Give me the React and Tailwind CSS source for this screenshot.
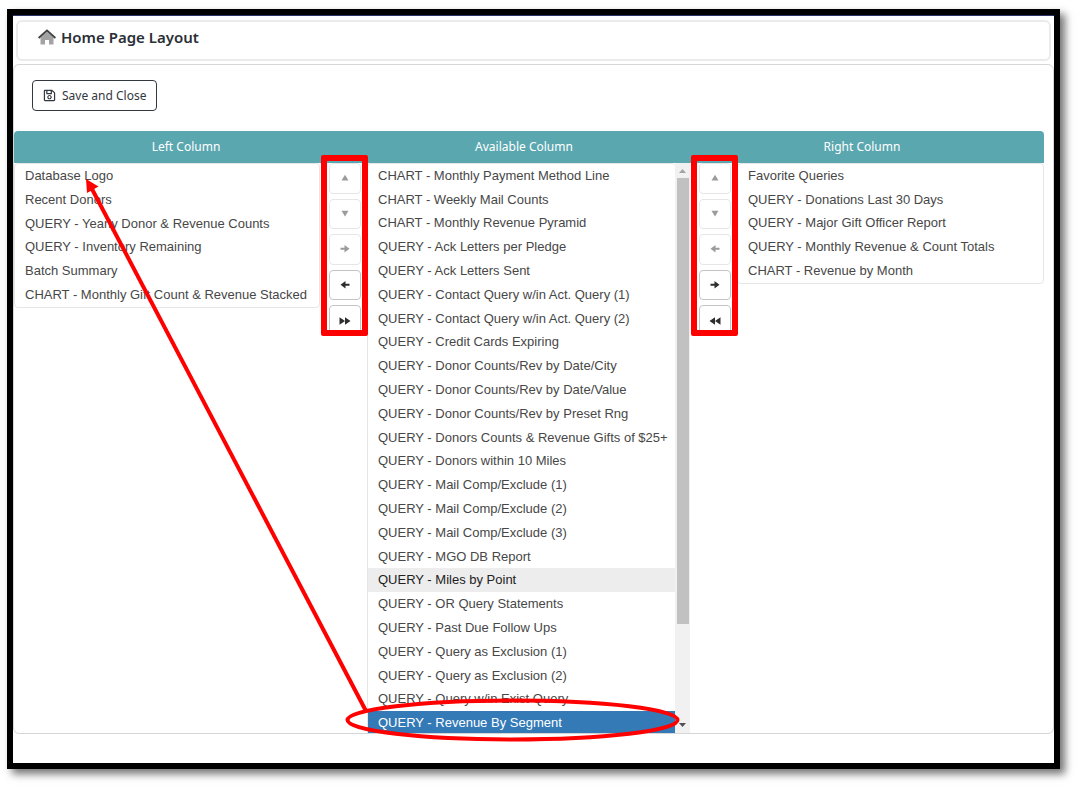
import React, { useState } from 'react';
import { FaRegSave } from 'react-icons/fa';

const leftItems = [
  'Database Logo',
  'Recent Donors',
  'QUERY - Yearly Donor & Revenue Counts',
  'QUERY - Inventory Remaining',
  'Batch Summary',
  'CHART - Monthly Gift Count & Revenue Stacked',
];

const availableItems = [
  'CHART - Monthly Payment Method Line',
  'CHART - Weekly Mail Counts',
  'CHART - Monthly Revenue Pyramid',
  'QUERY - Ack Letters per Pledge',
  'QUERY - Ack Letters Sent',
  'QUERY - Contact Query w/in Act. Query (1)',
  'QUERY - Contact Query w/in Act. Query (2)',
  'QUERY - Credit Cards Expiring',
  'QUERY - Donor Counts/Rev by Date/City',
  'QUERY - Donor Counts/Rev by Date/Value',
  'QUERY - Donor Counts/Rev by Preset Rng',
  'QUERY - Donors Counts & Revenue Gifts of $25+',
  'QUERY - Donors within 10 Miles',
  'QUERY - Mail Comp/Exclude (1)',
  'QUERY - Mail Comp/Exclude (2)',
  'QUERY - Mail Comp/Exclude (3)',
  'QUERY - MGO DB Report',
  'QUERY - Miles by Point',
  'QUERY - OR Query Statements',
  'QUERY - Past Due Follow Ups',
  'QUERY - Query as Exclusion (1)',
  'QUERY - Query as Exclusion (2)',
  'QUERY - Query w/in Exist Query',
  'QUERY - Revenue By Segment',
];

const rightItems = [
  'Favorite Queries',
  'QUERY - Donations Last 30 Days',
  'QUERY - Major Gift Officer Report',
  'QUERY - Monthly Revenue & Count Totals',
  'CHART - Revenue by Month',
];

const iconPaths = {
  up: 'M8 4.8 L11.5 10.5 H4.5 Z',
  down: 'M8 10.5 L11.5 4.8 H4.5 Z',
  right: 'M3.5 6.8 H7.5 V4 L12.5 7.8 L7.5 11.6 V8.8 H3.5 Z',
  left: 'M12.5 6.8 H8.5 V4 L3.5 7.8 L8.5 11.6 V8.8 H12.5 Z',
  allRight: 'M2.5 4.3 L8 8 L2.5 11.7 Z M8 4.3 L13.5 8 L8 11.7 Z',
  allLeft: 'M13.5 4.3 L8 8 L13.5 11.7 Z M8 4.3 L2.5 8 L8 11.7 Z',
};

const leftTools = [
  { icon: 'up', label: 'Move up', disabled: true },
  { icon: 'down', label: 'Move down', disabled: true },
  { icon: 'right', label: 'Remove from left column', disabled: true },
  { icon: 'left', label: 'Add to left column' },
  { icon: 'allRight', label: 'Remove all from left column' },
];

const rightTools = [
  { icon: 'up', label: 'Move up', disabled: true },
  { icon: 'down', label: 'Move down', disabled: true },
  { icon: 'left', label: 'Remove from right column', disabled: true },
  { icon: 'right', label: 'Add to right column' },
  { icon: 'allLeft', label: 'Remove all from right column' },
];

const HomeIcon = () => (
  <svg viewBox="0 0 18 16" className="w-[18px] h-4" aria-hidden="true">
    <path d="M2.5 8.5 L9 2.5 L15.5 8.5 V15.6 H11 V11 H7 V15.6 H2.5 Z" fill="#a3a3a3" />
    <path d="M0.6 9 L9 1.4 L17.4 9" fill="none" stroke="#3f3f3f" strokeWidth="1.8" />
  </svg>
);

const SaveIcon = () => <FaRegSave className="w-[13px] h-[13px]" aria-hidden="true" />;

const ItemList = ({ label, items, selected, hovered, onSelect, className }) => (
  <ul role="listbox" aria-label={label} className={`grid auto-rows-fr ${className}`}>
    {items.map((item) => {
      let tone = 'text-[#474747]';
      if (item === selected) tone = 'bg-[#337ab7] text-white';
      else if (item === hovered) tone = 'bg-[#ededed] text-[#222222]';
      return (
        <li
          key={item}
          role="option"
          aria-selected={item === selected}
          onClick={() => onSelect && onSelect(item)}
          className={`flex items-center pl-2.5 text-[13px] leading-5 whitespace-nowrap cursor-default ${tone}`}
        >
          {item}
        </li>
      );
    })}
  </ul>
);

const Toolbar = ({ tools }) => (
  <div className="relative">
    <div className="grid auto-rows-fr gap-[5px] h-[173px] w-8 ml-[9px]">
      {tools.map((tool) => (
        <button
          key={tool.label}
          type="button"
          aria-label={tool.label}
          disabled={tool.disabled}
          className="flex items-center justify-center bg-white border border-[#c4c4c4] rounded-sm text-[#2e2e2e] disabled:border-[#e6e6e6] disabled:text-[#9b9b9b]"
        >
          <svg viewBox="0 0 16 16" className="w-4 h-4" fill="currentColor" aria-hidden="true">
            <path d={iconPaths[tool.icon]} />
          </svg>
        </button>
      ))}
    </div>
    <div className="absolute -top-2 left-px -right-px h-[181px] border-6 border-[#ff0000] rounded-xs pointer-events-none" />
  </div>
);

const Scrollbar = () => (
  <div className="shrink-0 w-[15px] flex flex-col items-center bg-[#f1f1f1]" aria-hidden="true">
    <svg viewBox="0 0 15 15" className="w-[15px] h-[15px]">
      <path d="M7.5 6 L11 10 H4 Z" fill="#a3a3a3" />
    </svg>
    <div className="w-3 h-[446px] bg-[#c1c1c1]" />
    <svg viewBox="0 0 15 15" className="w-[15px] h-[15px] mt-auto">
      <path d="M7.5 9 L11 5 H4 Z" fill="#505050" />
    </svg>
  </div>
);

const Annotation = () => (
  <svg className="absolute inset-0 w-full h-full pointer-events-none" aria-hidden="true">
    <path d="M366 711 L92 189" stroke="#ff0000" strokeWidth="4" fill="none" />
    <path d="M86 179 L98.5 186.5 L87 193 Z" fill="#ff0000" />
    <ellipse cx="512.5" cy="720" rx="165" ry="19.5" stroke="#ff0000" strokeWidth="4" fill="none" />
  </svg>
);

export default function App() {
  const [selected, setSelected] = useState('QUERY - Revenue By Segment');

  return (
    <div className="relative min-h-screen bg-white pt-[9px] pl-[7px] pr-[17px] pb-4 font-['Liberation_Sans',Arial,sans-serif]">
      <main className="border-6 border-black bg-white shadow-[5px_5px_8px_rgba(0,0,0,0.55)]">
        <div className="border-t border-[#2b3467] pb-[29px]">
          <header className="mt-1 mx-[3px] h-[41px] flex items-center gap-[5px] pl-5 pb-2 border-2 border-[#ebebeb] rounded-md">
            <HomeIcon />
            <h1 className="font-['Noto_Sans',sans-serif] text-[15px] leading-5 font-semibold text-[#2b2f36]">
              Home Page Layout
            </h1>
          </header>

          <section className="mt-[3px] border border-[#d6d6d6] rounded-md">
            <div className="pt-[15px] pb-5 pl-[18px]">
              <button
                type="button"
                className="flex items-center gap-1.5 h-[31px] px-2.5 border border-[#33383e] rounded-sm text-[#33383e] font-['Noto_Sans',sans-serif] text-xs"
              >
                <SaveIcon />
                Save and Close
              </button>
            </div>

            <div className="mr-[9px]">
              <div className="grid grid-cols-3 items-center h-8 pl-[3px] pr-[13px] bg-[#5ba7b0] rounded-t-sm text-center text-white font-['Noto_Sans',sans-serif] text-xs">
                <h2>Left Column</h2>
                <h2>Available Column</h2>
                <h2>Right Column</h2>
              </div>

              <div className="grid grid-cols-[minmax(0,306fr)_47px_minmax(0,323fr)_47px_minmax(0,307fr)] items-start">
                <ItemList
                  label="Left Column"
                  items={leftItems}
                  className="h-[145px] border border-[#e6e6e6] rounded-sm"
                />
                <Toolbar tools={leftTools} />
                <div className="flex h-[570px] overflow-hidden">
                  <ItemList
                    label="Available Column"
                    items={availableItems}
                    selected={selected}
                    hovered="QUERY - Miles by Point"
                    onSelect={setSelected}
                    className="flex-1 min-w-0 h-[572px] border-l border-t border-[#e6e6e6] rounded-t-sm"
                  />
                  <Scrollbar />
                </div>
                <Toolbar tools={rightTools} />
                <ItemList
                  label="Right Column"
                  items={rightItems}
                  className="h-[121px] border border-[#e6e6e6] rounded-sm"
                />
              </div>
            </div>
          </section>
        </div>
      </main>
      <Annotation />
    </div>
  );
}
